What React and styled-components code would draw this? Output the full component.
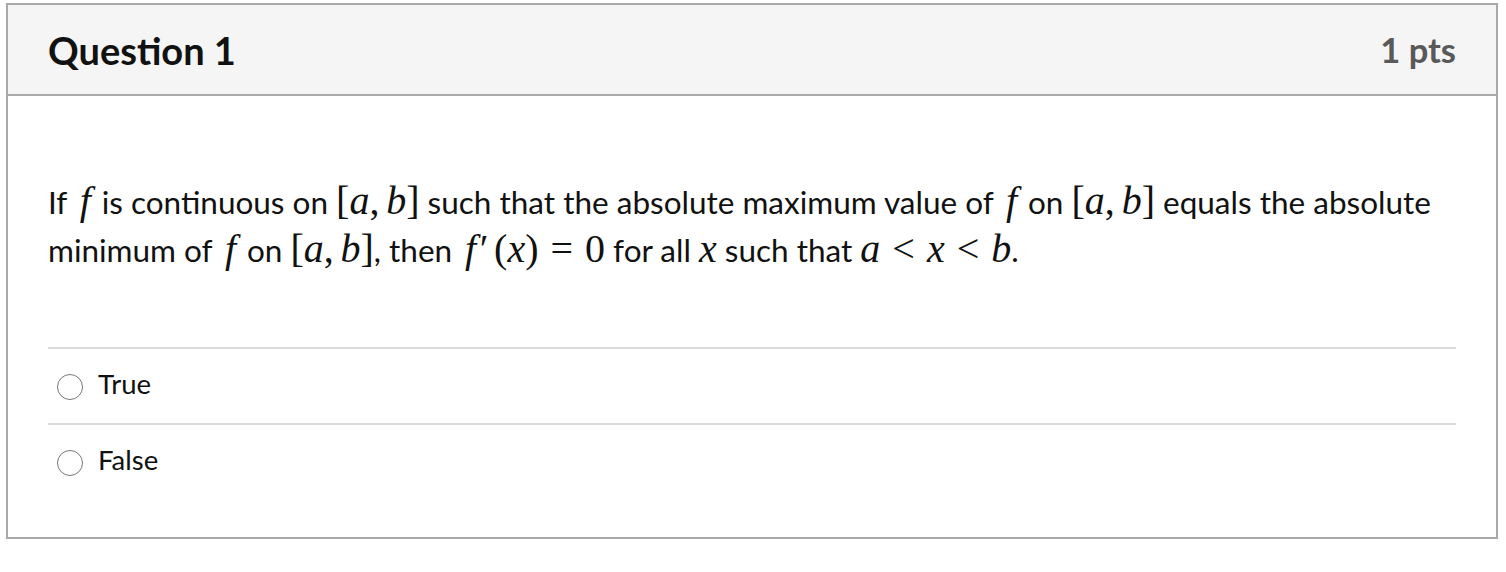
import React from 'react';
import styled, { createGlobalStyle } from 'styled-components';

const GlobalStyle = createGlobalStyle`
  html, body {
    margin: 0;
    padding: 0;
    background: #fff;
  }
  body {
    font-family: Lato, "Open Sans", "Liberation Sans", sans-serif;
    color: #111;
  }
`;

const Page = styled.div`
  padding: 3px 0 0 6px;
`;

const Card = styled.section`
  width: 1492px;
  box-sizing: border-box;
  border: 2px solid #a9a9a9;
  background: #fff;
`;

const Header = styled.header`
  display: flex;
  align-items: center;
  justify-content: space-between;
  height: 89px;
  padding: 0 40px;
  background: #f5f5f5;
  border-bottom: 2px solid #a9a9a9;
`;

const Title = styled.h2`
  margin: 0;
  font-size: 38px;
  font-weight: 700;
  color: #111;
`;

const Points = styled.span`
  font-size: 34.5px;
  font-weight: 700;
  color: #595959;
`;

const Body = styled.div`
  padding: 82px 40px 38px;
`;

const QuestionText = styled.p`
  margin: 0 0 73px;
  font-size: 31.5px;
  line-height: 48px;
`;

// inline math, set roughly the way KaTeX sets it
const Mi = styled.span`
  font-family: "Liberation Serif", "DejaVu Serif", serif;
  font-style: italic;
  font-size: 1.27em;
  line-height: 1;
  margin: ${props => (props.wide ? '0 0.07em 0 0.12em' : '0')};
`;

const Mo = styled.span`
  font-family: "Liberation Serif", "DejaVu Serif", serif;
  font-size: 1.27em;
  line-height: 1;
  margin: ${props => {
    if (props.rel) return '0 0.3em';
    if (props.punct) return '0 0.17em 0 0';
    if (props.prime) return '0 0.14em 0 0.02em';
    return '0';
  }};
`;

const Answers = styled.ul`
  list-style: none;
  margin: 0;
  padding: 0;
`;

const Answer = styled.li`
  display: flex;
  align-items: center;
  gap: 15px;
  box-sizing: border-box;
  height: 76px;
  padding: 0 0 5px 9px;
  border-top: 2px solid #dcdcdc;
  font-size: 27.5px;
`;

const Radio = styled.span`
  width: 24px;
  height: 24px;
  border: 1.5px solid #777;
  border-radius: 50%;
  flex-shrink: 0;
  margin-top: 6px;
`;

const Interval = () => (
  <>
    <Mo>[</Mo><Mi>a</Mi><Mo punct>,</Mo><Mi>b</Mi><Mo>]</Mo>
  </>
);

export default function App() {
  return (
    <Page>
      <GlobalStyle />
      <Card>
        <Header>
          <Title>Question 1</Title>
          <Points>1 pts</Points>
        </Header>
        <Body>
          <QuestionText>
            If <Mi wide>f</Mi> is continuous on <Interval /> such that the absolute maximum value
            of <Mi wide>f</Mi> on <Interval /> equals the absolute
            <br />
            minimum of <Mi wide>f</Mi> on <Interval />,
            then <Mi wide>f</Mi><Mo prime>′</Mo><Mo>(</Mo><Mi>x</Mi><Mo>)</Mo><Mo rel>=</Mo><Mo>0</Mo> for
            all <Mi>x</Mi> such that <Mi>a</Mi><Mo rel>&lt;</Mo><Mi>x</Mi><Mo rel>&lt;</Mo><Mi>b</Mi>.
          </QuestionText>
          <Answers>
            <Answer><Radio />True</Answer>
            <Answer><Radio />False</Answer>
          </Answers>
        </Body>
      </Card>
    </Page>
  );
}
